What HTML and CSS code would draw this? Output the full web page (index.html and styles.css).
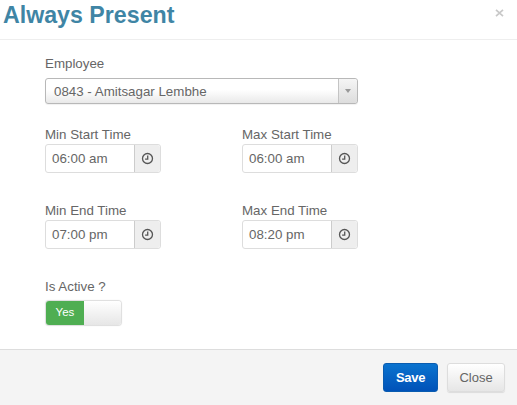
FILE: index.html
```html
<!DOCTYPE html>
<html lang="en">
<head>
    <meta charset="UTF-8">
    <title>Always Present</title>
    <link rel="stylesheet" href="styles.css">
</head>
<body>
<div class="modal">
    <div class="modal-header">
        <h3>Always Present</h3>
        <svg class="close-x" viewBox="0 0 9 8"><path d="M1 .8L8 7.2M8 .8L1 7.2"/></svg>
    </div>
    <div class="modal-body">
        <label>Employee</label>
        <div class="select-box">
            <span class="select-text">0843 - Amitsagar Lembhe</span>
            <span class="select-arrow"><i></i></span>
        </div>
        <div class="time-row">
            <div class="time-field">
                <label>Min Start Time</label>
                <div class="time-input">
                    <span class="time-text">06:00 am</span>
                    <span class="time-addon"><svg viewBox="0 0 12 12"><circle cx="6" cy="6" r="4.6"/><path d="M6.2 3.2V6.5H3.8"/></svg></span>
                </div>
            </div>
            <div class="time-field">
                <label>Max Start Time</label>
                <div class="time-input">
                    <span class="time-text">06:00 am</span>
                    <span class="time-addon"><svg viewBox="0 0 12 12"><circle cx="6" cy="6" r="4.6"/><path d="M6.2 3.2V6.5H3.8"/></svg></span>
                </div>
            </div>
        </div>
        <div class="time-row">
            <div class="time-field">
                <label>Min End Time</label>
                <div class="time-input">
                    <span class="time-text">07:00 pm</span>
                    <span class="time-addon"><svg viewBox="0 0 12 12"><circle cx="6" cy="6" r="4.6"/><path d="M6.2 3.2V6.5H3.8"/></svg></span>
                </div>
            </div>
            <div class="time-field">
                <label>Max End Time</label>
                <div class="time-input">
                    <span class="time-text">08:20 pm</span>
                    <span class="time-addon"><svg viewBox="0 0 12 12"><circle cx="6" cy="6" r="4.6"/><path d="M6.2 3.2V6.5H3.8"/></svg></span>
                </div>
            </div>
        </div>
        <label class="active-label">Is Active ?</label>
        <div class="switch">
            <span class="switch-on">Yes</span>
            <span class="switch-off"></span>
        </div>
    </div>
    <div class="modal-footer">
        <button class="btn btn-save">Save</button>
        <button class="btn btn-close">Close</button>
    </div>
</div>
</body>
</html>
```
FILE: styles.css
```css
html, body {
    margin: 0;
    padding: 0;
    background: #fff;
}
body {
    font-family: "Liberation Sans", Arial, sans-serif;
    font-size: 13.33px;
    color: #666;
    width: 517px;
    height: 405px;
    overflow: hidden;
}
.modal {
    display: flex;
    flex-direction: column;
    height: 405px;
}
.modal-header {
    height: 39px;
    border-bottom: 1px solid #eee;
    display: flex;
    align-items: flex-start;
    justify-content: space-between;
    padding: 0 13px 0 3px;
    flex: none;
}
h3 {
    margin: 0;
    font-size: 23.2px;
    line-height: 31px;
    font-weight: bold;
    color: #3f85a5;
}
.close-x {
    width: 9px;
    height: 8px;
    margin-top: 9px;
    fill: none;
    stroke: #c8c8c8;
    stroke-width: 1.7;
}
.modal-body {
    flex: 1;
    padding: 16px 0 0 45px;
}
label {
    display: block;
    font-size: 13.33px;
    line-height: 16px;
    color: #666;
}
.select-box {
    width: 311px;
    height: 24px;
    margin-top: 6px;
    border: 1px solid #b8b8b8;
    border-radius: 3px;
    background: linear-gradient(#fff 45%, #e9e9e9);
    display: flex;
    align-items: center;
    justify-content: space-between;
    box-shadow: 0 1px 1px rgba(0,0,0,.06);
}
.select-text {
    padding-left: 8px;
}
.select-arrow {
    width: 18px;
    height: 100%;
    border-left: 1px solid #c4c4c4;
    display: flex;
    align-items: center;
    justify-content: center;
    background: linear-gradient(#f5f5f5, #ddd);
    border-radius: 0 3px 3px 0;
}
.select-arrow i {
    border-left: 3px solid transparent;
    border-right: 3px solid transparent;
    border-top: 4px solid #999;
}
.time-row {
    display: flex;
    gap: 81px;
    margin-top: 23px;
}
.time-row + .time-row {
    margin-top: 30px;
}
.time-input {
    width: 114px;
    height: 27px;
    margin-top: 1px;
    border: 1px solid #ddd;
    border-radius: 3px;
    display: flex;
    align-items: center;
}
.time-text {
    flex: 1;
    padding-left: 6px;
}
.time-addon {
    width: 25px;
    height: 100%;
    background: #eee;
    border-left: 1px solid #ccc;
    border-radius: 0 3px 3px 0;
    display: flex;
    align-items: center;
    justify-content: center;
}
.time-addon svg {
    width: 13px;
    height: 13px;
    fill: none;
    stroke: #555;
    stroke-width: 1.2;
}
.active-label {
    margin-top: 30px;
}
.switch {
    width: 75px;
    height: 24px;
    margin-top: 6px;
    margin-left: 1px;
    border-radius: 3px;
    display: flex;
    overflow: hidden;
    box-shadow: 0 0 1px 1px #ddd;
}
.switch-on {
    width: 38px;
    background: #4fae52;
    color: #fff;
    font-size: 11.5px;
    line-height: 22px;
    text-align: center;
}
.switch-off {
    flex: 1;
    background: linear-gradient(#fff, #e6e6e6);
}
.modal-footer {
    height: 56px;
    border-top: 1px solid #ddd;
    background: #f4f4f4;
    flex: none;
    display: flex;
    justify-content: flex-end;
    align-items: flex-start;
    gap: 9px;
    padding: 13px 12px 0 0;
    box-sizing: border-box;
}
.btn {
    height: 29px;
    border-radius: 3px;
    font-family: inherit;
    font-size: 13px;
    padding: 0;
    border: 1px solid #ddd;
}
.btn-save {
    width: 55px;
    background: linear-gradient(#0a73cf, #0052b8);
    border-color: #0a5cb0;
    color: #fff;
    font-weight: bold;
    letter-spacing: -.3px;
}
.btn-close {
    width: 58px;
    background: linear-gradient(#fff, #e6e6e6);
    color: #666;
    box-shadow: 0 1px 1px rgba(0,0,0,.1);
}
```
